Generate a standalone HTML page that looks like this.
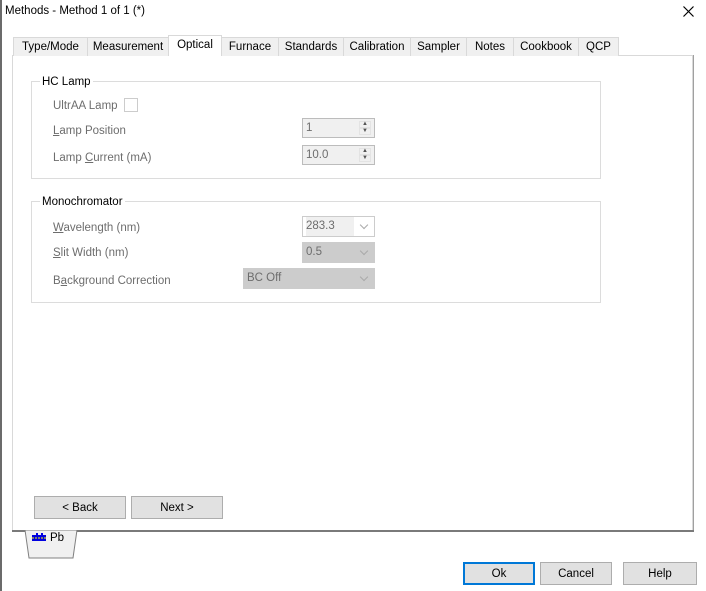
<!DOCTYPE html>
<html><head><meta charset="utf-8"><style>
*{box-sizing:border-box;margin:0;padding:0}
body{width:706px;height:591px;background:#fff;font-family:"Liberation Sans",sans-serif;font-size:11.5px;color:#000;position:relative;overflow:hidden}
.a{position:absolute}
.tab{position:absolute;top:37px;height:19px;border:1px solid #d9d9d9;border-bottom:none;background:#f0f0f0;text-align:center;line-height:19px;white-space:nowrap}
.g{color:#6d6d6d}
.grp{position:absolute;border:1px solid #dcdcdc}
.grp span{position:absolute;top:-7px;left:8px;background:#fff;padding:0 2px;line-height:14px}
.spin{position:absolute;width:73px;height:20px;border:1px solid #bcbcbc;background:#f0f0f0;color:#6d6d6d;padding-left:3px;line-height:18px}
.spin i{position:absolute;right:3px;width:12px;height:7px;border:1px solid #e3e3e3;font-style:normal;font-size:6px;line-height:5px;text-align:center;color:#555}
.cb{position:absolute;width:73px;height:21px;border:1px solid #ccc;padding-left:3px;line-height:19px;color:#6d6d6d}
.cb::after{content:"";position:absolute;right:7px;top:5px;width:5px;height:5px;border-right:1px solid #aaa;border-bottom:1px solid #aaa;transform:rotate(45deg)}
.btn{position:absolute;height:23px;border:1px solid #adadad;background:#e1e1e1;text-align:center;line-height:22px}
u{text-decoration:underline}
</style></head><body>
<div class="a" style="left:0;top:0;width:2px;height:591px;background:#6b6b6b"></div>
<div class="a" style="left:5px;top:5px">Methods - Method 1 of 1 (*)</div>
<svg class="a" style="left:683px;top:6px" width="11" height="11"><path d="M0.5 0.5L10.5 10.5M10.5 0.5L0.5 10.5" stroke="#000" stroke-width="1.2"/></svg>

<div class="a" style="left:12px;top:55px;width:682px;height:476px;border:1px solid #d9d9d9;border-right:2px solid #d9d9d9"></div>
<div class="a" style="left:693px;top:55px;width:1px;height:476px;background:#a0a0a0"></div>
<div class="a" style="left:12px;top:530px;width:682px;height:2px;background:#7a7a7a"></div>

<div class="tab" style="left:13px;width:75px">Type/Mode</div>
<div class="tab" style="left:87px;width:82px">Measurement</div>
<div class="tab" style="left:168px;top:35px;height:21px;width:54px;background:#fff;z-index:2">Optical</div>
<div class="tab" style="left:221px;width:58px">Furnace</div>
<div class="tab" style="left:278px;width:66px">Standards</div>
<div class="tab" style="left:343px;width:68px">Calibration</div>
<div class="tab" style="left:410px;width:57px">Sampler</div>
<div class="tab" style="left:466px;width:48px">Notes</div>
<div class="tab" style="left:513px;width:66px">Cookbook</div>
<div class="tab" style="left:578px;width:41px">QCP</div>

<div class="grp" style="left:31px;top:81px;width:570px;height:98px"><span>HC Lamp</span></div>
<div class="a g" style="left:53px;top:100px">UltrAA Lamp</div>
<div class="a" style="left:124px;top:98px;width:14px;height:14px;border:1px solid #ccc"></div>
<div class="a g" style="left:53px;top:125px"><u>L</u>amp Position</div>
<div class="a g" style="left:53px;top:152px">Lamp <u>C</u>urrent (mA)</div>
<div class="spin" style="left:302px;top:118px">1<i style="top:2px">▲</i><i style="top:9px">▼</i></div>
<div class="spin" style="left:302px;top:145px">10.0<i style="top:2px">▲</i><i style="top:9px">▼</i></div>

<div class="grp" style="left:31px;top:201px;width:570px;height:102px"><span>Monochromator</span></div>
<div class="a g" style="left:53px;top:222px"><u>W</u>avelength (nm)</div>
<div class="a g" style="left:53px;top:247px"><u>S</u>lit Width (nm)</div>
<div class="a g" style="left:53px;top:275px">B<u>a</u>ckground Correction</div>
<div class="cb" style="left:302px;top:216px;background:#fff"><span style="background:#f0f0f0;display:inline-block;width:48px">283.3</span></div>
<div class="cb" style="left:302px;top:242px;background:#cccccc">0.5</div>
<div class="cb" style="left:243px;top:268px;width:132px;background:#cccccc">BC Off</div>

<div class="btn" style="left:34px;top:496px;width:92px">&lt; Back</div>
<div class="btn" style="left:131px;top:496px;width:92px">Next &gt;</div>

<svg class="a" style="left:24px;top:530px" width="54" height="30"><polygon points="1,0 53,0 49,28 5,28" fill="#f0f0f0" stroke="#808080"/></svg>
<svg class="a" style="left:32px;top:533px" width="14" height="10"><rect x="0" y="2" width="14" height="6" fill="#0000e0"/><line x1="0" y1="5" x2="14" y2="5" stroke="#ff0" stroke-dasharray="2,1"/><rect x="4" y="0" width="2" height="2" fill="#0000e0"/><rect x="9" y="0" width="2" height="2" fill="#0000e0"/></svg>
<div class="a" style="left:50px;top:532px">Pb</div>

<div class="btn" style="left:463px;top:562px;width:72px;border:2px solid #0078d7;line-height:20px">Ok</div>
<div class="btn" style="left:540px;top:562px;width:72px">Cancel</div>
<div class="btn" style="left:623px;top:562px;width:74px">Help</div>
</body></html>
